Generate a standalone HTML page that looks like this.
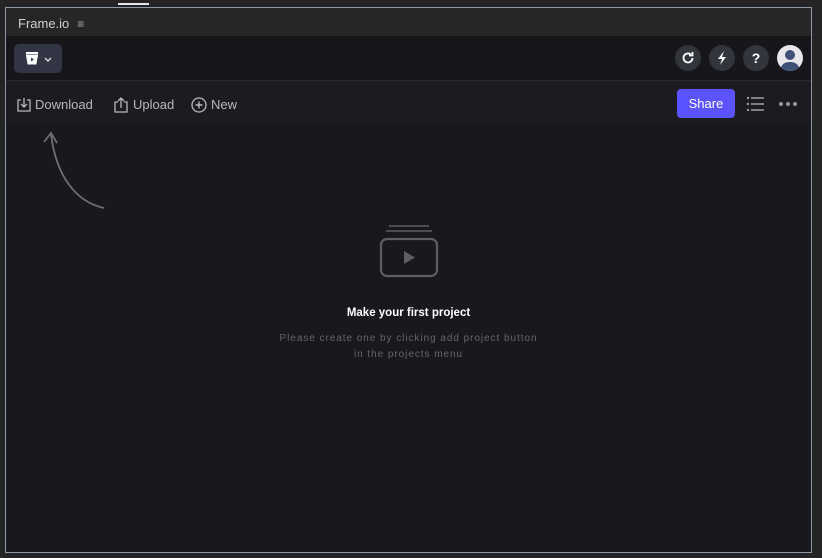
<!DOCTYPE html>
<html><head><style>
*{margin:0;padding:0;box-sizing:border-box}
body{width:822px;height:558px;background:#242424;font-family:"Liberation Sans",sans-serif;position:relative;overflow:hidden}
.topline{position:absolute;left:118px;top:3px;width:31px;height:2px;background:#e6e6e6}
.frame{position:absolute;left:5px;top:7px;width:807px;height:546px;border:1px solid #8c9aa8;background:#18191d;overflow:hidden}
.title{height:28px;background:#262626;color:#d0d0d0;font-size:13px;padding:8px 0 0 12px}
.title span{margin-left:8px;color:#aaa;font-size:12px}
.bar1{position:absolute;top:28px;left:0;right:0;height:45px;background:#17171b;border-bottom:1px solid #2a2a30}
.bar2{position:absolute;top:73px;left:0;right:0;height:44px;background:#1b1b20}
.ws{position:absolute;left:8px;top:8px;width:48px;height:29px;background:#323644;border-radius:5px}
.rb{position:absolute;top:9px;width:26px;height:26px;border-radius:50%;background:#33353d}
.btn{position:absolute;top:16px;color:#b8b8be;font-size:13px}
.share{position:absolute;left:671px;top:8px;width:58px;height:29px;background:#5b53ff;border-radius:4px;color:#fff;font-size:13px;text-align:center;line-height:29px}
.h{position:absolute;left:0;width:100%;text-align:center}
</style></head><body>
<div class="topline"></div>
<div class="frame">
<div class="title">Frame.io<span>≡</span></div>
<div class="bar1">
 <div class="ws"><svg width="48" height="29"><path d="M12 9h12M13 11.5h10l-1.5 8h-7z" stroke="#fff" stroke-width="2" fill="#fff"/><path d="M17 13.5l3 2-3 2z" fill="#323644"/><path d="M31 14l3 3 3-3" stroke="#ddd" stroke-width="1.4" fill="none"/></svg></div>
 <div class="rb" style="left:669px"><svg width="26" height="26"><path d="M17.5 13a4.5 4.5 0 1 1-1.5-3.4" stroke="#fff" stroke-width="1.8" fill="none"/><path d="M17.5 7v3.5H14" stroke="#fff" stroke-width="1.8" fill="none"/></svg></div>
 <div class="rb" style="left:703px"><svg width="26" height="26"><path d="M15 6l-6 8h4l-2 6 6-8h-4z" fill="#fff"/></svg></div>
 <div class="rb" style="left:737px;color:#fff;font-weight:bold;font-size:14px;text-align:center;line-height:26px">?</div>
 <div class="rb" style="left:771px;background:#e8e8ec;overflow:hidden"><svg width="26" height="26"><circle cx="13" cy="10" r="5" fill="#3e5277"/><path d="M3 26c1-7 5-9 10-9s9 2 10 9z" fill="#3e5277"/></svg></div>
</div>
<div class="bar2">
 <svg style="position:absolute;left:10px;top:16px" width="16" height="16"><path d="M5 3H2v11h12V3h-3M8 1v9M5 7l3 3 3-3" stroke="#b8b8be" stroke-width="1.3" fill="none"/></svg>
 <div class="btn" style="left:29px">Download</div>
 <svg style="position:absolute;left:107px;top:15px" width="16" height="17"><path d="M5 6H2v10h12V6h-3M8 12V2M5 5l3-3 3 3" stroke="#b8b8be" stroke-width="1.3" fill="none"/></svg>
 <div class="btn" style="left:127px">Upload</div>
 <svg style="position:absolute;left:185px;top:16px" width="16" height="16"><circle cx="8" cy="8" r="7" stroke="#b8b8be" stroke-width="1.3" fill="none"/><path d="M8 4.5v7M4.5 8h7" stroke="#b8b8be" stroke-width="1.4"/></svg>
 <div class="btn" style="left:205px">New</div>
 <div class="share">Share</div>
 <svg style="position:absolute;left:740px;top:15px" width="20" height="16"><g fill="#999"><circle cx="2" cy="2" r="1.2"/><circle cx="2" cy="8" r="1.2"/><circle cx="2" cy="14" r="1.2"/><rect x="5" y="1.2" width="13" height="1.6"/><rect x="5" y="7.2" width="13" height="1.6"/><rect x="5" y="13.2" width="13" height="1.6"/></g></svg>
 <svg style="position:absolute;left:772px;top:20px" width="22" height="6"><g fill="#999"><circle cx="3" cy="3" r="2"/><circle cx="10" cy="3" r="2"/><circle cx="17" cy="3" r="2"/></g></svg>
</div>
<svg style="position:absolute;left:30px;top:118px" width="75" height="85"><path d="M68 82C40 76 20 50 15 8" stroke="#6e6e74" stroke-width="1.8" fill="none"/><path d="M8 16l7-9 6 10" stroke="#6e6e74" stroke-width="1.8" fill="none"/></svg>
<svg style="position:absolute;left:373px;top:216px" width="60" height="55"><path d="M10 2h40M7 7h46" stroke="#5e5e64" stroke-width="1.6"/><rect x="2" y="15" width="56" height="37" rx="6" stroke="#5e5e64" stroke-width="2.2" fill="none"/><path d="M25 27l11 6.5-11 6.5z" fill="#5e5e64"/></svg>
<div class="h" style="top:299px;color:#fff;font-weight:bold;font-size:11.5px">Make your first project</div>
<div class="h" style="top:323px;color:#66666e;font-size:10px;letter-spacing:0.95px;line-height:16px">Please create one by clicking add project button<br>in the projects menu</div>
</div>
</body></html>
